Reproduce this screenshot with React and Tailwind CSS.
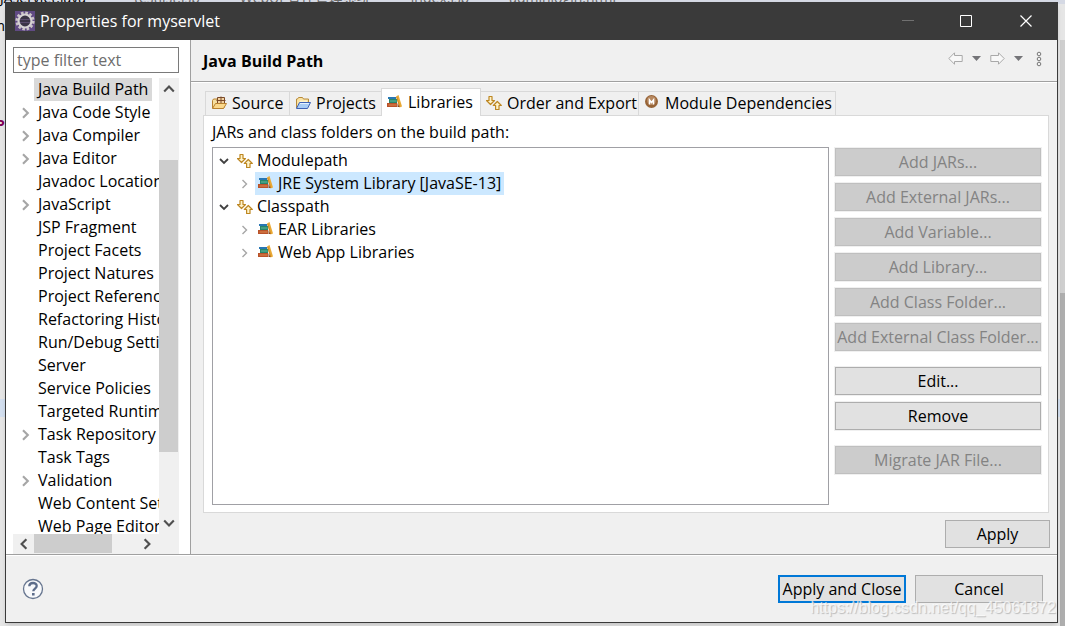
import React, { useState } from 'react';

const pages = [
  { name: 'Java Build Path' },
  { name: 'Java Code Style', expandable: true },
  { name: 'Java Compiler', expandable: true },
  { name: 'Java Editor', expandable: true },
  { name: 'Javadoc Location' },
  { name: 'JavaScript', expandable: true },
  { name: 'JSP Fragment' },
  { name: 'Project Facets' },
  { name: 'Project Natures' },
  { name: 'Project References' },
  { name: 'Refactoring History' },
  { name: 'Run/Debug Settings' },
  { name: 'Server' },
  { name: 'Service Policies' },
  { name: 'Targeted Runtimes' },
  { name: 'Task Repository', expandable: true },
  { name: 'Task Tags' },
  { name: 'Validation', expandable: true },
  { name: 'Web Content Settings' },
  { name: 'Web Page Editor' }
];

const SourceIcon = () => (
  <svg width="16" height="16" viewBox="0 0 16 16" className="shrink-0">
    <path d="M1.500 13V5.500l1-1.500H6l1 1.500h6V13z" fill="#f6dfa0" stroke="#b8812f" />
    <path d="M6.500 2.500h7v6h-7z" fill="#f3d3a0" stroke="#7b4a2a" />
    <path d="M10 1.500v7.500M5.500 5.500h9" stroke="#7b4a2a" />
    <path d="M1.500 13.500 4.500 8.500h11l-3 5z" fill="#fbd88b" stroke="#b8812f" strokeLinejoin="round" />
  </svg>
);

const ProjectsIcon = () => (
  <svg width="16" height="16" viewBox="0 0 16 16" className="shrink-0">
    <path d="M1.500 13V4h1l1-1.500h4L8.500 4h5v3" fill="#f9e3a4" stroke="#b88a3a" />
    <path d="M5 5.500h7V8H4z" fill="#fff4cf" />
    <path d="M1.500 13.500 4.500 7.500h11l-3 6z" fill="#a9ccf5" stroke="#3f62b5" strokeLinejoin="round" />
    <path d="M5 8.500h9" stroke="#e4f1ff" />
  </svg>
);

const LibraryIcon = () => (
  <svg width="16" height="16" viewBox="0 0 16 16" className="shrink-0">
    <rect x="1" y="3" width="8" height="2" fill="#2877b4" />
    <rect x="2" y="5" width="8" height="4" fill="#27866b" />
    <path d="M3 7h6.500" stroke="#66b99b" />
    <rect x="0" y="9" width="10" height="4" fill="#b9532a" />
    <path d="M1.500 11h8" stroke="#e08a50" />
    <path d="m9 2.500 2.500-1.500 3.500 11.500-2.500 1z" fill="#e9a936" />
    <path d="m9.700 3 3 10" stroke="#c77d1c" strokeWidth=".8" />
    <path d="M10.500 9v4h2z" fill="#894521" />
  </svg>
);

const PathIcon = () => (
  <svg
    width="16"
    height="16"
    viewBox="0 0 16 16"
    fill="#fff3c9"
    stroke="#bd8722"
    strokeWidth="1.200"
    strokeLinejoin="round"
    className="shrink-0"
  >
    <path d="M3 1.500h3v4h2.500l-4 4-4-4H3z" />
    <path d="m11.300 6.500 4 4H13v4h-3.400v-4H7.300z" />
  </svg>
);

const ModuleIcon = () => (
  <svg width="16" height="16" viewBox="0 0 16 16" className="shrink-0">
    <circle cx="7.500" cy="6.500" r="6.500" fill="#976437" />
    <circle cx="7.500" cy="5.500" r="4.500" fill="#b78961" />
    <path d="M5.500 9.500V5l2 2.500 2-2.500v4.500" fill="none" stroke="#fff" strokeWidth="1.500" />
  </svg>
);

const EclipseIcon = () => (
  <svg width="20" height="20" viewBox="0 0 20 20">
    <rect width="20" height="20" fill="#604a83" />
    <circle cx="10" cy="10" r="8.300" fill="none" stroke="#c9c3c6" strokeWidth="2.600" strokeDasharray="2.600 1.745" />
    <circle cx="10" cy="10" r="6.500" fill="#3b3446" stroke="#d6d2d3" strokeWidth="2.200" />
    <path d="M5 8.500h10M5 11.500h10" stroke="#5b4d6d" />
  </svg>
);

const HelpIcon = () => (
  <svg width="22" height="22" viewBox="0 0 22 22" fill="none">
    <circle cx="11" cy="11" r="9.500" fill="#f8f9fb" stroke="#66758f" strokeWidth="1.300" />
    <path d="M7.300 8.300c0-4.400 7.400-4.300 7.400-.4 0 2.700-3.400 2.600-3.400 5.300" stroke="#5d6d8b" strokeWidth="2.300" />
    <rect x="10" y="15" width="2.600" height="2.500" fill="#5d6d8b" />
  </svg>
);

const Chevron = ({ className = '', d = 'm2.500 1 4 4-4 4', size = 10, weight = 1.8 }) => (
  <svg width={size} height={size} viewBox="0 0 10 10" fill="none" stroke="currentColor" strokeWidth={weight} className={`shrink-0 ${className}`}>
    <path d={d} />
  </svg>
);

const down = 'm1 3 4 4 4-4';
const up = 'm1 7 4-4 4 4';
const left = 'm7 1-4 4 4 4';

const HistoryArrow = ({ flip }) => (
  <svg width="15" height="13" viewBox="0 0 15 13" className={flip ? '-scale-x-100' : ''}>
    <path d="M.8 6.500 6.500.8v2.700h7.700v6H6.500v2.700z" fill="#f8f8f8" stroke="#a9a9a9" strokeLinejoin="round" />
  </svg>
);

const Caret = () => (
  <svg width="9" height="5" viewBox="0 0 9 5">
    <path d="M0 0h9L4.500 5z" fill="#747478" />
  </svg>
);

const tabs = [
  { name: 'Source', icon: SourceIcon, width: 'w-[85px]' },
  { name: 'Projects', icon: ProjectsIcon, width: 'w-[93px]' },
  { name: 'Libraries', icon: LibraryIcon, width: 'w-[100px]' },
  { name: 'Order and Export', icon: PathIcon, width: 'w-[159px]' },
  { name: 'Module Dependencies', icon: ModuleIcon, width: 'w-[198px]' }
];

const tree = [
  { name: 'Modulepath', children: ['JRE System Library [JavaSE-13]'] },
  { name: 'Classpath', children: ['EAR Libraries', 'Web App Libraries'] }
];

const actionGroups = [
  {
    disabled: true,
    names: [
      'Add JARs...',
      'Add External JARs...',
      'Add Variable...',
      'Add Library...',
      'Add Class Folder...',
      'Add External Class Folder...'
    ]
  },
  { disabled: false, names: ['Edit...', 'Remove'] },
  { disabled: true, names: ['Migrate JAR File...'] }
];

// The editor that shows round the edges of the dialog
const EditorBehind = () => (
  <div aria-hidden="true" className="absolute inset-0 overflow-hidden bg-[#e6e6e6] text-sm">
    <div className="absolute inset-x-0 -top-2 flex h-3 gap-10 leading-3 whitespace-nowrap bg-[#d5d9e4] text-[#666]">
      <span className="text-black">JAservlet.java</span>
      <span className="pl-2">testlist.jsp</span>
      <span>WebUI 有任管理系统</span>
      <span>index.jsp</span>
      <span>adminlogin.html</span>
    </div>
    <span className="absolute top-4 -left-2">m</span>
    <span className="absolute top-[115px] -left-1 font-bold text-[#7f0055]">P</span>
    <div className="absolute top-[399px] left-0 h-[18px] w-full bg-[#d3dfef]" />
    <div className="absolute top-10 right-0 bottom-0 w-[5px] bg-[#cfcfcf]" />
    <div className="absolute top-[293px] right-0 bottom-0 w-[5px] bg-[#aeaeae]" />
  </div>
);

const TitleBar = () => (
  <header className="flex h-[38px] shrink-0 items-center bg-[#3a3a3a] pl-[9px] text-white">
    <EclipseIcon />
    <h1 className="flex-1 pl-[5px]">Properties for myservlet</h1>
    <button type="button" aria-label="Minimize" disabled className="flex w-[58px] justify-center">
      <svg width="12" height="12" viewBox="0 0 12 12"><path d="M0 5.500h12" stroke="#707070" /></svg>
    </button>
    <button type="button" aria-label="Maximize" className="flex w-[58px] justify-center">
      <svg width="12" height="12" viewBox="0 0 12 12"><path d="M.5.5h11v11H.5z" fill="none" stroke="#fff" /></svg>
    </button>
    <button type="button" aria-label="Close" className="flex w-[62px] justify-center">
      <svg width="12" height="12" viewBox="0 0 12 12"><path d="m.5.5 11 11M11.500.5l-11 11" stroke="#fff" strokeWidth="1.200" /></svg>
    </button>
  </header>
);

const Sidebar = ({ page, onSelect }) => (
  <aside className="flex w-[185px] shrink-0 flex-col border-r border-[#a0a0a0] bg-white pt-[7px] pr-[11px] pl-[7px]">

    <input
      type="text"
      aria-label="Filter pages"
      placeholder="type filter text"
      className="h-[26px] w-full shrink-0 border border-[#7a7a7a] px-[3px] outline-none placeholder:text-[#6d6d6d]"
    />

    <div className="mt-[5px] flex min-h-0 flex-1">

      <ul className="min-w-0 flex-1 overflow-hidden">
        {pages.map((item) => (
          <li key={item.name} className="flex h-[23px] items-center">
            <span className="flex w-[21px] shrink-0 justify-center pl-1">
              {item.expandable && <Chevron size={12} className="text-[#a6a6a6]" />}
            </span>
            <button
              type="button"
              onClick={() => onSelect(item.name)}
              className={`h-[23px] shrink-0 px-1 pb-px whitespace-nowrap ${page === item.name ? 'bg-[#d9d9d9]' : ''}`}
            >
              {item.name}
            </button>
          </li>
        ))}
      </ul>

      <div className="flex w-5 shrink-0 flex-col bg-[#f0f0f0] text-[#505050]">
        <button type="button" aria-label="Scroll up" className="flex h-[21px] items-center justify-center">
          <Chevron d={up} size={12} />
        </button>
        <div className="flex-[61]" />
        <div className="mr-px flex-[291] bg-[#cdcdcd]" />
        <div className="flex-[61]" />
        <button type="button" aria-label="Scroll down" className="flex h-[21px] items-center justify-center">
          <Chevron d={down} size={12} />
        </button>
      </div>

    </div>

    <div className="flex h-5 shrink-0 bg-[#f0f0f0] pr-5 text-[#505050]">
      <button type="button" aria-label="Scroll left" className="flex w-[21px] items-center justify-center">
        <Chevron d={left} size={12} />
      </button>
      <div className="mb-px flex-[78] bg-[#cdcdcd]" />
      <div className="flex-[26]" />
      <button type="button" aria-label="Scroll right" className="flex w-[21px] items-center justify-start pl-[3px]">
        <Chevron d="m3 1 4 4-4 4" size={12} />
      </button>
    </div>

  </aside>
);

const PageHeader = () => (
  <div className="flex h-[42px] shrink-0 items-center border-b border-[#a0a0a0] pr-[15px] pl-3">
    <h2 className="flex-1 pt-px font-bold">Java Build Path</h2>
    <div className="mb-1 flex items-center gap-[9px]">
      <button type="button" aria-label="Back"><HistoryArrow /></button>
      <button type="button" aria-label="Back history"><Caret /></button>
      <button type="button" aria-label="Forward"><HistoryArrow flip /></button>
      <button type="button" aria-label="Forward history"><Caret /></button>
      <button type="button" aria-label="Menu" className="ml-1">
        <svg width="6" height="16" viewBox="0 0 6 16" fill="none" stroke="#777">
          <circle cx="3" cy="3" r="1.800" />
          <circle cx="3" cy="8" r="1.800" />
          <circle cx="3" cy="13" r="1.800" />
        </svg>
      </button>
    </div>
  </div>
);

const LibraryTree = () => {
  const [selected, setSelected] = useState('JRE System Library [JavaSE-13]');

  return (
    <ul className="min-w-0 flex-1 border border-[#a0a0a5] pt-px">
      {tree.map((root) => (
        <li key={root.name}>

          <div className="flex h-[23px] items-center pl-[6px]">
            <Chevron d={down} className="mr-2 text-[#404040]" />
            <PathIcon />
            <button type="button" className="px-1 pb-px">{root.name}</button>
          </div>

          <ul>
            {root.children.map((name) => (
              <li key={name} className="flex h-[23px] items-center pl-[27px]">
                <Chevron className="mr-[5px] text-[#a6a6a6]" weight={1.4} />
                <button
                  type="button"
                  onClick={() => setSelected(name)}
                  className={`flex h-[23px] items-center gap-1 px-[3px] pb-px ${selected === name ? 'bg-[#cce8ff]' : ''}`}
                >
                  <LibraryIcon />
                  {name}
                </button>
              </li>
            ))}
          </ul>

        </li>
      ))}
    </ul>
  );
};

const App = () => {
  const [page, setPage] = useState('Java Build Path');

  const [tab, setTab] = useState('Libraries');

  return (
    <div className="relative flex h-screen flex-col overflow-hidden pt-[2px] pr-[7px] pb-[3px] pl-[5px] font-['Open_Sans','Noto_Sans_CJK_SC',sans-serif] text-base leading-5 text-black">

      <EditorBehind />

      <div className="relative flex min-h-0 flex-1 flex-col border border-t-0 border-[#3a3a3a] bg-[#f0f0f0] shadow-md">

        <TitleBar />

        <div className="flex min-h-0 flex-1 border-b border-[#a0a0a0]">

          <Sidebar page={page} onSelect={setPage} />

          <main className="flex min-w-0 flex-1 flex-col">

            <PageHeader />

            <div className="flex min-h-0 flex-1 flex-col border-t border-white pt-[5px] pr-2 pl-3">

              {/* Tabs */}
              <div role="tablist" className="flex h-[27px] shrink-0 items-end pl-[2px]">
                {tabs.map(({ name, icon: Icon, width }) => (
                  <button
                    key={name}
                    type="button"
                    role="tab"
                    aria-selected={tab === name}
                    onClick={() => setTab(name)}
                    className={`-mr-px flex items-center gap-[5px] border border-b-0 border-[#d9d9d9] pb-px pl-[5px] whitespace-nowrap ${width} ${
                      tab === name ? 'relative -mb-px h-7 bg-white' : 'h-6 bg-[#f0f0f0]'
                    }`}
                  >
                    <Icon />
                    {name}
                  </button>
                ))}
              </div>

              {/* Libraries */}
              <section className="flex min-h-0 flex-1 flex-col border border-[#d9d9d9] bg-white pr-[6px] pb-[7px] pl-2">

                <p className="pt-[6px] pb-[5px]">JARs and class folders on the build path:</p>

                <div className="flex min-h-0 flex-1 gap-[5px]">

                  <LibraryTree />

                  <div className="flex w-52 shrink-0 flex-col gap-[14px]">
                    {actionGroups.map((group) => (
                      <div key={group.names[0]} className="flex flex-col gap-[5px]">
                        {group.names.map((name) => (
                          <button
                            key={name}
                            type="button"
                            disabled={group.disabled}
                            className="h-[30px] border border-[#f0f0f0] bg-[#e1e1e1] whitespace-nowrap inset-ring inset-ring-[#adadad] disabled:bg-[#cccccc] disabled:text-[#838383] disabled:inset-ring-[#bfbfbf]"
                          >
                            {name}
                          </button>
                        ))}
                      </div>
                    ))}
                  </div>

                </div>

              </section>

              <div className="-mr-px flex shrink-0 justify-end pt-[7px] pb-[6px]">
                <button type="button" className="h-7 w-[105px] border border-[#adadad] bg-[#e1e1e1]">
                  Apply
                </button>
              </div>

            </div>

          </main>

        </div>

        <footer className="flex h-[67px] shrink-0 items-center gap-[9px] border-t border-white pr-[14px] pl-4">
          <button type="button" aria-label="Help">
            <HelpIcon />
          </button>
          <button type="button" className="ml-auto h-7 w-32 border-2 border-[#0078d7] bg-[#e1e1e1] whitespace-nowrap">
            Apply and Close
          </button>
          <button type="button" className="h-7 w-32 border border-[#adadad] bg-[#e1e1e1]">
            Cancel
          </button>
        </footer>

      </div>

      <span className="pointer-events-none absolute right-[9px] bottom-2 font-['Liberation_Sans',sans-serif] text-base leading-5 text-white/70 [text-shadow:1px_1px_1px_#bbbbbb]">
        https://blog.csdn.net/qq_45061872
      </span>

    </div>
  );
};

export default App;
